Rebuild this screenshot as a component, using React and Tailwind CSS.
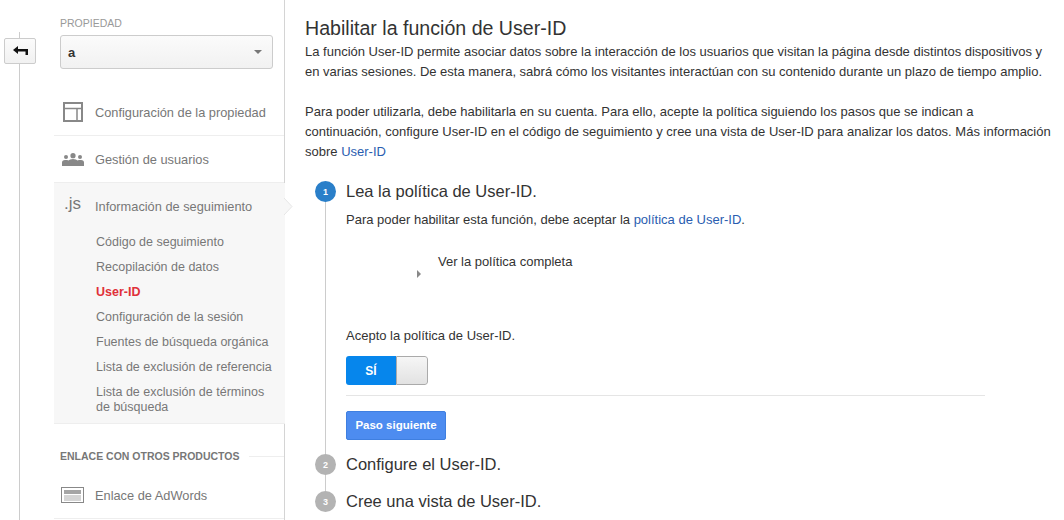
const PropertyIcon = () => (
  <svg width="20" height="20" viewBox="0 0 20 20" fill="none" stroke="#888" strokeWidth="2">
    <rect x="1" y="1" width="18" height="18" />
    <path d="M1 6.500h18M14 6.500V19" strokeWidth="1.500" />
  </svg>
);

const UsersIcon = () => (
  <svg width="22" height="13" viewBox="0 0 22 13" fill="#888">
    <circle cx="11" cy="2.700" r="2.600" />
    <circle cx="4" cy="4" r="2" />
    <circle cx="18" cy="4" r="2" />
    <path d="M0 13V9.500Q0 7 3 7h2q1 0 1.500.500Q7.500 6 11 6t4.500 1.500Q16 7 17 7h2q3 0 3 2.500V13z" />
  </svg>
);

const AdsIcon = () => (
  <svg width="23" height="16" viewBox="0 0 23 16" fill="none" stroke="#888">
    <rect x="0.500" y="0.500" width="22" height="15" />
    <path d="M3 4h17M3 6h17" strokeWidth="1.500" />
    <path d="M3 9h17M3 11h17M3 13h17" stroke="#aaa" />
  </svg>
);

const subItems = [
  'Código de seguimiento',
  'Recopilación de datos',
  'User-ID',
  'Configuración de la sesión',
  'Fuentes de búsqueda orgánica',
  'Lista de exclusión de referencia',
  'Lista de exclusión de términos de búsqueda',
];

const Sidebar = () => (
  <aside className="w-[231px] shrink-0 border-r border-[#d4d4d4] text-[12.800px] text-[#777]">
    <div className="pl-[6px] pr-[11px] pt-[17px]">
      <div className="text-[10.500px] leading-[12px] text-[#999]">PROPIEDAD</div>
      <div className="mt-[6px] flex h-[34px] items-center justify-between rounded-[3px] border border-[#ccc] bg-gradient-to-b from-[#fbfbfb] to-[#f1f1f1] pl-[7px] pr-[10px]">
        <span className="pt-[2px] text-[13px] font-bold text-[#333]">a</span>
        <span className="h-0 w-0 border-x-[4px] border-t-[4px] border-x-transparent border-t-[#777]" />
      </div>
    </div>
    <div className="mt-[20px] flex h-[47px] items-center gap-[11px] border-b border-[#eee] pl-[9px]">
      <PropertyIcon />
      <span className="ml-[1px] pt-[2px]">Configuración de la propiedad</span>
    </div>
    <div className="flex h-[47px] items-center gap-[11px] border-b border-[#eee] pl-[8px]">
      <UsersIcon />
      <span className="pt-[2px]">Gestión de usuarios</span>
    </div>
    <div className="relative mr-[-1px] border-b border-[#eee] bg-[#f7f7f7] pb-[3px]">
      <div className="flex h-[47px] items-center pl-[10px]">
        <span className="w-[31px] pb-[5px] text-[17px] text-[#777]">.js</span>
        <span>Información de seguimiento</span>
      </div>
      <svg className="absolute left-[230px] top-[15px]" width="9" height="18" viewBox="0 0 9 18">
        <path d="M0 0 8 8.500 0 17z" fill="#f7f7f7" />
        <path d="M0 0 8 8.500 0 17" fill="none" stroke="#e6e6e6" />
      </svg>
      <ul className="pl-[42px] pr-[11px] text-[12.500px] leading-[15px]">
        {subItems.map((item) => (
          <li
            key={item}
            className={`py-[5px] ${item === 'User-ID' ? 'font-bold text-[#e0313a]' : 'text-[#777]'}`}
          >
            {item}
          </li>
        ))}
      </ul>
    </div>
    <div className="mt-[25px] flex items-center gap-[10px] pl-[6px]">
      <span className="text-[10.500px] font-bold leading-[14px] text-[#777]">ENLACE CON OTROS PRODUCTOS</span>
      <span className="h-px flex-1 bg-[#eee]" />
    </div>
    <div className="mt-[9px] flex h-[47px] items-center gap-[11px] border-b border-[#eee] pl-[7px]">
      <AdsIcon />
      <span className="pt-[2px]">Enlace de AdWords</span>
    </div>
  </aside>
);

const StepHead = ({ n, active, children }) => (
  <div className="flex items-center gap-[10px]">
    <span
      className={`relative flex size-[21px] items-center justify-center rounded-full text-[9px] font-bold text-white ${active ? 'bg-[#2a7fc9]' : 'bg-[#b3b3b3]'}`}
    >
      {n}
    </span>
    <h2 className="text-[16.500px] leading-[21px] text-[#333]">{children}</h2>
  </div>
);

const Link = ({ children }) => <span className="text-[#2a5db0]">{children}</span>;

const Main = () => (
  <main className="flex-1 pl-[20px] pr-[10px] pt-[16px] text-[13px] leading-[20px] text-[#333]">
    <h1 className="text-[19.600px] leading-[24px] text-[#333]">Habilitar la función de User-ID</h1>
    <p className="mt-[2px]">
      La función User-ID permite asociar datos sobre la interacción de los usuarios que visitan la página desde distintos dispositivos y en varias sesiones. De esta manera, sabrá cómo los visitantes interactúan con su contenido durante un plazo de tiempo amplio.
    </p>
    <p className="mt-[20px]">
      Para poder utilizarla, debe habilitarla en su cuenta. Para ello, acepte la política siguiendo los pasos que se indican a<br />
      continuación, configure User-ID en el código de seguimiento y cree una vista de User-ID para analizar los datos. Más información<br />
      sobre <Link>User-ID</Link>
    </p>
    <div className="relative mt-[19px] pl-[10px]">
      <span className="absolute bottom-[10px] left-[20px] top-[10px] w-px bg-[#ccc]" />
      <StepHead n="1" active>Lea la política de User-ID.</StepHead>
      <div className="ml-[31px] w-[639px]">
        <p className="mt-[8px]">
          Para poder habilitar esta función, debe aceptar la <Link>política de User-ID</Link>.
        </p>
        <div className="relative mt-[22px] h-[73px] pl-[92px]">
          <span className="absolute left-[71px] top-[18px] h-0 w-0 border-y-[4px] border-l-[4px] border-y-transparent border-l-[#888]" />
          Ver la política completa
        </div>
        <p className="mt-[1px]">Acepto la política de User-ID.</p>
        <div className="mt-[10px] flex h-[29px] w-[82px] overflow-hidden rounded-[3px]">
          <span className="flex w-[50px] items-center justify-center bg-[#0686ec] text-[12px] font-bold text-white">SÍ</span>
          <span className="flex-1 rounded-r-[3px] border border-[#aaa] bg-gradient-to-b from-[#f6f6f6] to-[#e2e2e2]" />
        </div>
        <div className="mt-[10px] h-px bg-[#e5e5e5]" />
        <button className="mt-[15px] block h-[29px] w-[100px] rounded-[2px] border border-[#3f7fe0] bg-[#4d8cf0] pb-[2px] text-[11.500px] font-bold text-white">
          Paso siguiente
        </button>
      </div>
      <div className="mt-[14px]"><StepHead n="2">Configure el User-ID.</StepHead></div>
      <div className="mt-[16px]"><StepHead n="3">Cree una vista de User-ID.</StepHead></div>
    </div>
  </main>
);

export default function App() {
  return (
    <div className="flex h-[520px] w-[1064px] overflow-hidden bg-white font-['Liberation_Sans',Arial,sans-serif]">
      <div className="w-[54px] shrink-0 pl-[19px] pt-[32px]">
        <div className="h-full w-px bg-[#ccc]">
          <button className="relative left-[-15px] top-[6px] flex h-[26px] w-[32px] items-center justify-center rounded-[2px] border border-[#ccc] bg-gradient-to-b from-[#fbfbfb] to-[#f1f1f1]">
            <svg width="15" height="10" viewBox="0 0 15 10" fill="#111">
              <path d="M0 4 5 0v3h10v6h-2.500V5.500H5V8z" />
            </svg>
          </button>
        </div>
      </div>
      <Sidebar />
      <Main />
    </div>
  );
}
